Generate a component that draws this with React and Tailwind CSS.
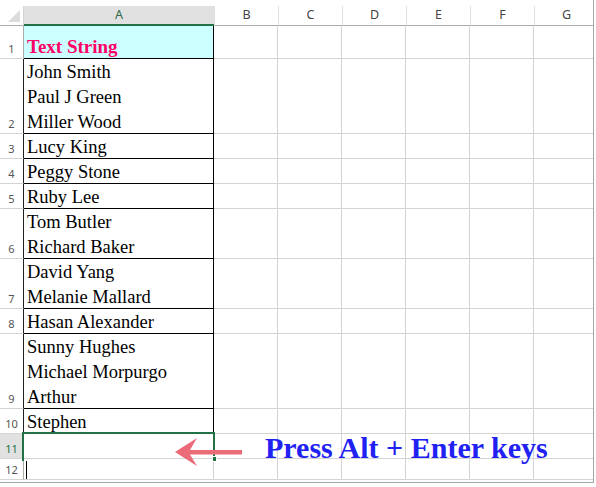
import React from "react";

const rows = [
  { n: 1, h: "h-[33px]", lines: ["Text String"], title: true, dark: true },
  { n: 2, h: "h-[75px]", lines: ["John Smith", "Paul J Green", "Miller Wood"], dark: true },
  { n: 3, h: "h-[25px]", lines: ["Lucy King"], dark: true },
  { n: 4, h: "h-[25px]", lines: ["Peggy Stone"], dark: true },
  { n: 5, h: "h-[25px]", lines: ["Ruby Lee"], dark: true },
  { n: 6, h: "h-[50px]", lines: ["Tom Butler", "Richard Baker"], dark: true },
  { n: 7, h: "h-[50px]", lines: ["David Yang", "Melanie Mallard"], dark: true },
  { n: 8, h: "h-[25px]", lines: ["Hasan Alexander"], dark: true },
  { n: 9, h: "h-[75px]", lines: ["Sunny Hughes", "Michael Morpurgo", "Arthur"], dark: true },
  { n: 10, h: "h-[25px]", lines: ["Stephen"], dark: true },
  { n: 11, h: "h-[25px]", lines: [], selected: true },
  { n: 12, h: "h-[21px]", lines: [] },
];

const others = ["B", "C", "D", "E", "F"];

const ui = { fontFamily: '"Segoe UI", "Noto Sans", sans-serif' };
const serif = { fontFamily: '"Liberation Serif", "Times New Roman", serif' };

function Row({ row }) {
  return (
    <div className={`flex ${row.h}`}>
      {/* row number */}
      <div
        className={`w-[24px] shrink-0 flex items-end justify-center pb-[4px] border-b border-r border-b-[#d4d4d4] text-[11px] leading-none ${
          row.selected ? "bg-[#e1e1e1] text-[#217346]" : "text-[#555]"
        } ${row.dark && row.n > 1 ? "border-r-[#222]" : "border-r-[#ababab]"}`}
        style={ui}
      >
        {row.n}
      </div>
      {/* column A */}
      <div
        className={`w-[190px] shrink-0 flex flex-col justify-end pl-[3px] border-b border-r ${
          row.dark ? "border-black" : "border-[#d4d4d4]"
        } ${row.title ? "bg-[#ccffff] text-[#ff0066] font-bold text-[19px]" : "text-black text-[18.5px]"}`}
        style={serif}
      >
        {row.lines.map((l) => (
          <div key={l} className="h-[25px] shrink-0 leading-[28px] whitespace-nowrap">
            {l}
          </div>
        ))}
      </div>
      {others.map((c) => (
        <div key={c} className="w-[64px] shrink-0 border-b border-r border-[#d4d4d4]" />
      ))}
      <div className="flex-1 border-b border-[#d4d4d4]" />
    </div>
  );
}

export default function App() {
  return (
    <div className="relative w-[596px] h-[487px] bg-white overflow-hidden">
      <div className="w-[594px] h-[483px] pt-[6px] border-r border-b border-[#a6a6a6]">
        {/* column headers */}
        <div className="flex h-[20px] text-[12.5px] text-[#444]" style={ui}>
          <div className="relative w-[24px] shrink-0 border-r border-b border-[#d4d4d4] border-b-[#ababab]">
            <svg className="absolute left-0 top-0" width="24" height="20" viewBox="0 0 24 20">
              <polygon points="20,4 20,16 8,16" fill="#dcdcdc" />
            </svg>
          </div>
          <div className="w-[190px] shrink-0 flex items-center justify-center bg-[#e1e1e1] border-b-2 border-[#217346] text-[#2e6b4a]">
            A
          </div>
          {others.map((c) => (
            <div
              key={c}
              className="w-[64px] shrink-0 flex items-center justify-center border-l border-b border-[#e0e0e0] border-b-[#ababab]"
            >
              {c}
            </div>
          ))}
          <div className="flex-1 flex items-center justify-center border-l border-b border-[#e0e0e0] border-b-[#ababab] pl-[5px]">
            G
          </div>
        </div>
        {rows.map((r) => (
          <Row key={r.n} row={r} />
        ))}
      </div>

      {/* active cell A11 */}
      <div className="absolute left-[22px] top-[432px] w-[193px] h-[2px] bg-[#217346]" />
      <div className="absolute left-[22px] top-[432px] w-[2px] h-[29px] bg-[#217346]" />
      <div className="absolute left-[213px] top-[432px] w-[2px] h-[24px] bg-[#217346]" />
      <div className="absolute left-[212px] top-[456px] w-[5px] h-[6px] bg-[#217346] border border-white" />
      {/* text cursor */}
      <div className="absolute left-[26px] top-[461px] w-[1px] h-[18px] bg-black" />

      {/* arrow */}
      <svg className="absolute left-0 top-0" width="596" height="487" viewBox="0 0 596 487">
        <path d="M175 452 L197 438 L190 450 L242 450 L242 454.5 L190 454.5 L197 466 Z" fill="#ec6b78" />
      </svg>

      <div
        className="absolute left-[265px] top-[433px] text-[30px] leading-[30px] font-bold text-[#2121f2] whitespace-nowrap"
        style={serif}
      >
        Press Alt + Enter keys
      </div>
    </div>
  );
}
